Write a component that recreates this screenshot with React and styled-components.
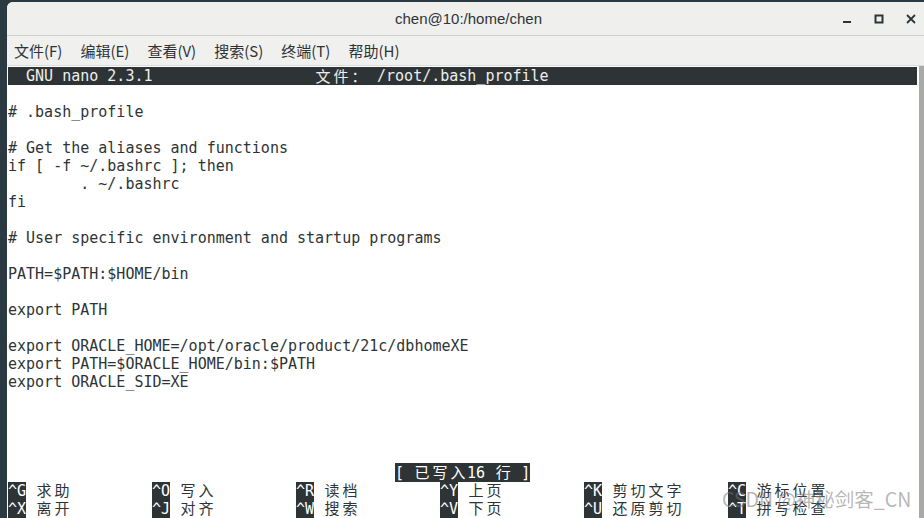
import React from 'react'
import styled, { createGlobalStyle } from 'styled-components'

const INK = '#2e3436'

const GlobalStyle = createGlobalStyle`
  html, body {
    margin: 0;
    padding: 0;
    background: #2b3a42;
    overflow: hidden;
  }
`

const Screen = styled.div`
  height: 518px;
  padding: 2px 0 0 7px;
  box-sizing: border-box;
  display: flex;
  position: relative;
`

const Window = styled.div`
  flex: 1;
  display: flex;
  flex-direction: column;
  background: #f0f0ef;
  border-top-left-radius: 6px;
  overflow: hidden;
`

const TitleBar = styled.div`
  height: 33px;
  flex: none;
  display: flex;
  align-items: center;
  justify-content: center;
  position: relative;
  background: #efefee;
  border-bottom: 1px solid #cfcfcd;
  font-family: 'Liberation Sans', Arial, sans-serif;
  font-size: 15px;
  color: ${INK};
`

const Title = styled.span`
  margin-left: 6px;
`

const Controls = styled.div`
  position: absolute;
  right: 5px;
  top: 0;
  height: 100%;
  display: flex;
  align-items: center;
  gap: 16px;
`

const ControlButton = styled.span`
  width: 16px;
  height: 16px;
  display: flex;
  align-items: center;
  justify-content: center;
`

const MenuBar = styled.div`
  height: 29px;
  flex: none;
  display: flex;
  align-items: center;
  padding-left: 7px;
  background: #f0f0ef;
  border-bottom: 1px solid #dcdcda;
  font-family: 'Noto Sans CJK SC', sans-serif;
  font-size: 15px;
  color: ${INK};
`

const MenuItem = styled.span`
  padding-right: 18px;
`

const Body = styled.div`
  flex: 1;
  display: flex;
  background: #ffffff;
`

const Terminal = styled.div`
  flex: 1;
  padding: 1px 0 0 1px;
  font-family: 'DejaVu Sans Mono', monospace;
  font-size: 15px;
  color: ${INK};
`

const Scrollbar = styled.div`
  width: 5px;
  margin-left: 2px;
  background: #a9aaa8;
`

const Row = styled.div`
  height: 18px;
  line-height: 18px;
  white-space: pre;
  display: flex;
  align-items: center;
  background: ${p => (p.$inverse ? INK : 'transparent')};
  color: ${p => (p.$inverse ? '#eeeeec' : INK)};
`

const Cell = styled.span`
  display: inline-block;
  width: ${p => p.$cols * 9}px;
  height: 18px;
  line-height: 18px;
  flex: none;
  white-space: pre;
`

const Wide = styled.span`
  display: inline-block;
  width: 18px;
  text-align: center;
  font-family: 'Noto Sans CJK SC', sans-serif;
  font-size: 15px;
  line-height: 18px;
`

const Inverse = styled.span`
  background: ${INK};
  color: #ffffff;
`

const Watermark = styled.div`
  position: absolute;
  left: 722px;
  top: 484px;
  font-family: 'Noto Sans CJK SC', sans-serif;
  font-size: 19.5px;
  color: rgba(120, 120, 120, 0.55);
  white-space: nowrap;
  pointer-events: none;
`

const isWide = ch => ch.charCodeAt(0) > 0x2e80

const Mono = ({ text }) => {
  const out = []
  let buf = ''
  Array.from(text).forEach((ch, i) => {
    if (isWide(ch)) {
      if (buf) out.push(<span key={'t' + i}>{buf}</span>)
      buf = ''
      out.push(<Wide key={i}>{ch}</Wide>)
    } else {
      buf += ch
    }
  })
  if (buf) out.push(<span key="end">{buf}</span>)
  return <>{out}</>
}

const lines = [
  '',
  '# .bash_profile',
  '',
  '# Get the aliases and functions',
  'if [ -f ~/.bashrc ]; then',
  '        . ~/.bashrc',
  'fi',
  '',
  '# User specific environment and startup programs',
  '',
  'PATH=$PATH:$HOME/bin',
  '',
  'export PATH',
  '',
  'export ORACLE_HOME=/opt/oracle/product/21c/dbhomeXE',
  'export PATH=$ORACLE_HOME/bin:$PATH',
  'export ORACLE_SID=XE',
  '',
  '',
  '',
  '',
]

const shortcuts = [
  [['^G', '求助'], ['^O', '写入'], ['^R', '读档'], ['^Y', '上页'], ['^K', '剪切文字'], ['^C', '游标位置']],
  [['^X', '离开'], ['^J', '对齐'], ['^W', '搜索'], ['^V', '下页'], ['^U', '还原剪切'], ['^T', '拼写检查']],
]

const menus = ['文件(F)', '编辑(E)', '查看(V)', '搜索(S)', '终端(T)', '帮助(H)']

const Minimize = () => (
  <svg width="10" height="10" viewBox="0 0 10 10">
    <rect x="1" y="7" width="8" height="2" fill={INK} />
  </svg>
)

const Maximize = () => (
  <svg width="10" height="10" viewBox="0 0 10 10">
    <rect x="1.5" y="1.5" width="7" height="7" fill="none" stroke={INK} strokeWidth="2" />
  </svg>
)

const Close = () => (
  <svg width="10" height="10" viewBox="0 0 10 10">
    <path d="M1 1 L9 9 M9 1 L1 9" stroke={INK} strokeWidth="1.8" />
  </svg>
)

const App = () => (
  <Screen>
    <GlobalStyle />
    <Window>
      <TitleBar>
        <Title>chen@10:/home/chen</Title>
        <Controls>
          <ControlButton><Minimize /></ControlButton>
          <ControlButton><Maximize /></ControlButton>
          <ControlButton><Close /></ControlButton>
        </Controls>
      </TitleBar>
      <MenuBar>
        {menus.map(m => <MenuItem key={m}>{m}</MenuItem>)}
      </MenuBar>
      <Body>
        <Terminal>
          <Row $inverse>
            <Cell $cols={34}>{'  GNU nano 2.3.1'}</Cell>
            <Mono text="文件： /root/.bash_profile" />
          </Row>
          {lines.map((l, i) => (
            <Row key={i}>{l}</Row>
          ))}
          <Row>
            <Cell $cols={43} />
            <Inverse><Mono text="[ 已写入16 行 ]" /></Inverse>
          </Row>
          {shortcuts.map((row, r) => (
            <Row key={'s' + r}>
              {row.map(([key, label]) => (
                <Cell key={key} $cols={16}>
                  <Inverse>{key}</Inverse> <Mono text={label} />
                </Cell>
              ))}
            </Row>
          ))}
        </Terminal>
        <Scrollbar />
      </Body>
    </Window>
    <Watermark>CSDN @神秘剑客_CN</Watermark>
  </Screen>
)

export default App
